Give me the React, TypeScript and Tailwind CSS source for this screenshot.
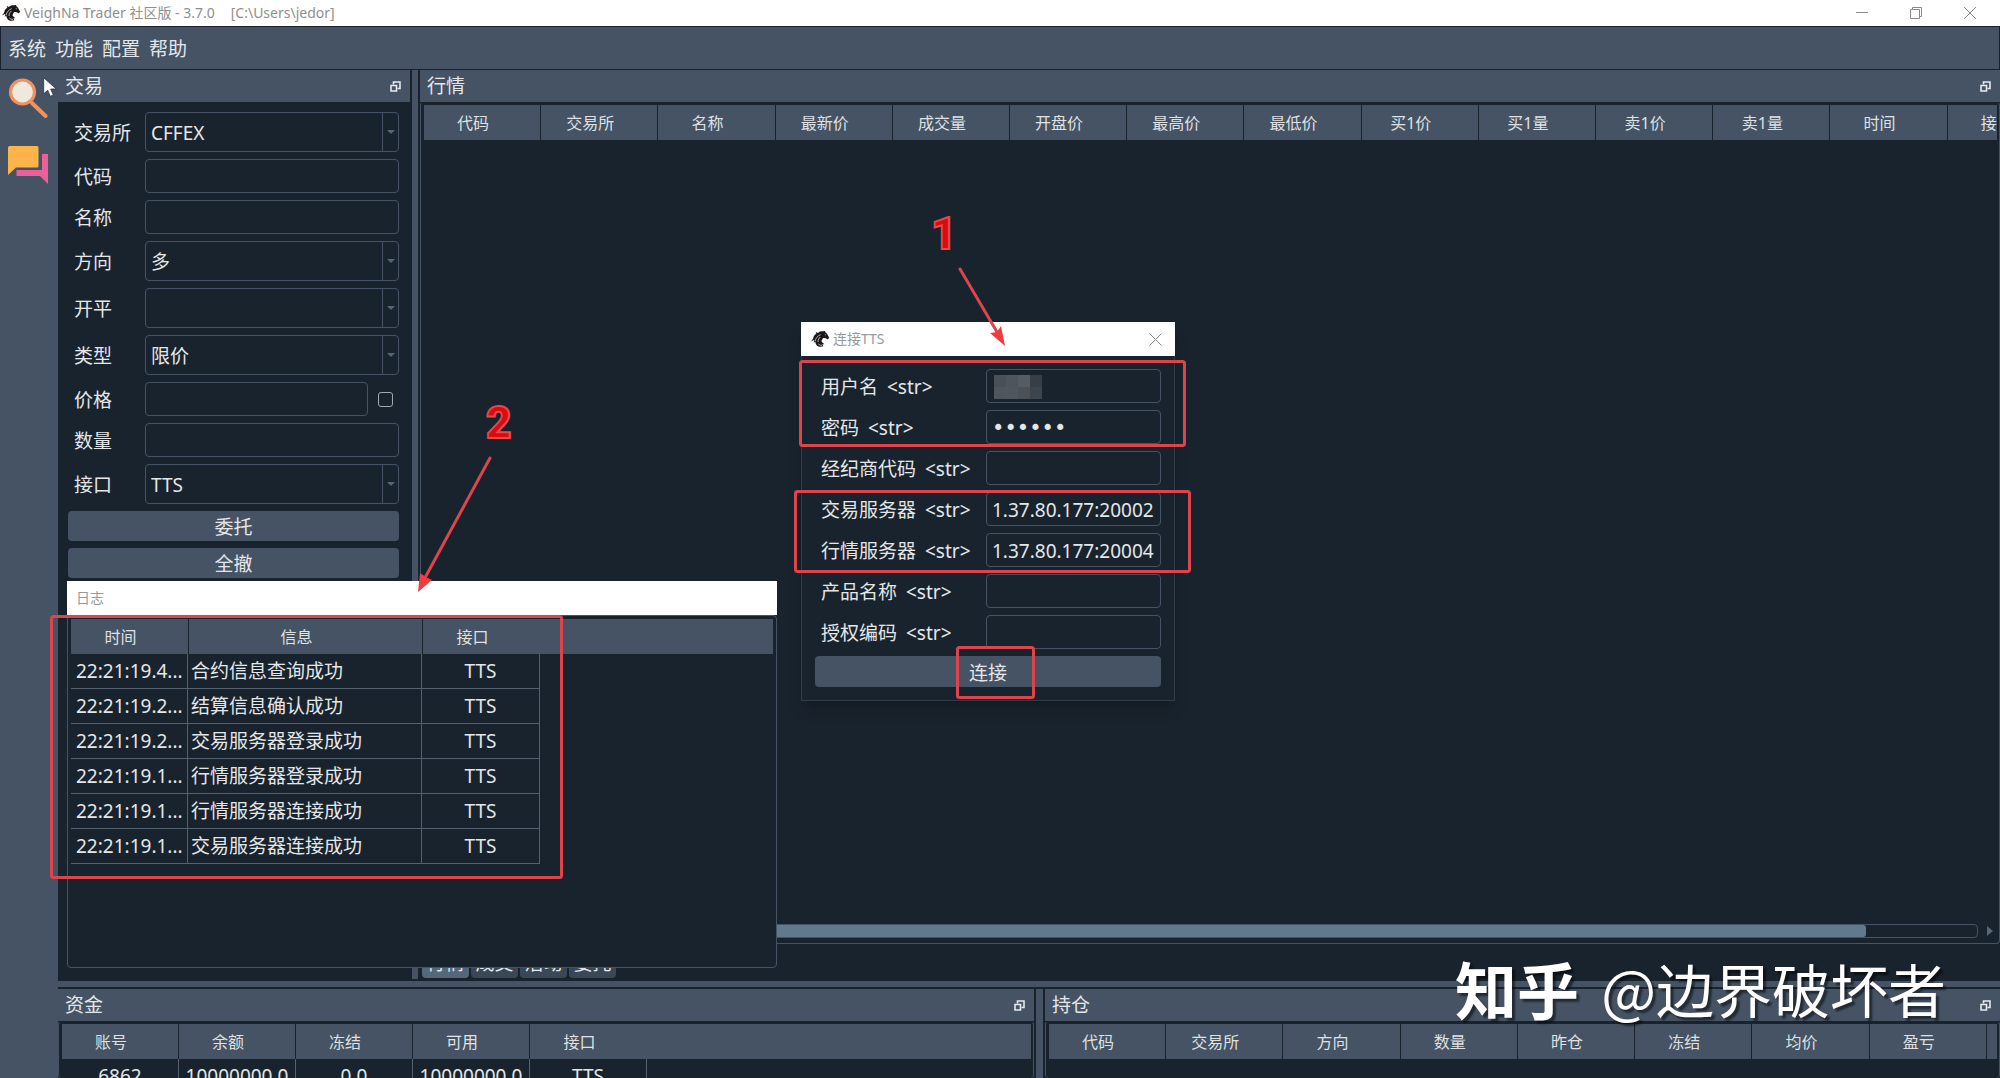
import type { ReactNode } from 'react';

const MARKET_COLUMNS = [
  '代码', '交易所', '名称', '最新价', '成交量', '开盘价', '最高价',
  '最低价', '买1价', '买1量', '卖1价', '卖1量', '时间', '接口',
];
const FUND_COLUMNS = ['账号', '余额', '冻结', '可用', '接口'];
const FUND_ROW = ['6862', '10000000.0', '0.0', '10000000.0', 'TTS'];
const POSITION_COLUMNS = ['代码', '交易所', '方向', '数量', '昨仓', '冻结', '均价', '盈亏', ''];

const LOGS = [
  { time: '22:21:19.4...', msg: '合约信息查询成功', gateway: 'TTS' },
  { time: '22:21:19.2...', msg: '结算信息确认成功', gateway: 'TTS' },
  { time: '22:21:19.2...', msg: '交易服务器登录成功', gateway: 'TTS' },
  { time: '22:21:19.1...', msg: '行情服务器登录成功', gateway: 'TTS' },
  { time: '22:21:19.1...', msg: '行情服务器连接成功', gateway: 'TTS' },
  { time: '22:21:19.1...', msg: '交易服务器连接成功', gateway: 'TTS' },
];

const TABS = ['行情', '成交', '活动', '委托'];

const MASK_BLOCKS = [
  'bg-[#495058]', 'bg-[#4f555c]', 'bg-[#575c62]', 'bg-[#363e47]',
  'bg-[#4f555c]', 'bg-[#50565d]', 'bg-[#4b5159]', 'bg-[#3c444d]',
];

/* ─── Icons ─────────────────────────────────────────────────────────── */

function HorseIcon() {
  return (
    <svg className="h-4 w-[18px] shrink-0" viewBox="0 0 54 48" aria-hidden="true">
      <path
        fill="#1c1718"
        d="M0 29c4-2 6-5 7-9 1-5 4-9 9-12l-2-5 7 3c4-4 9-5 14-5l7-1 1 4c4 2 6 6 8 10l3 5c0 3-2 5-4 6-3-1-5-4-9-4-3 0-5 0-6 2-2 4-4 6-3 9 3 4 7 5 8 8h-6l3 6-8 1c-6 0-11-2-13-6-2-3-3-6-3-9l-5 3 2-7c-4 0-6 1-8 5l1-6-6 3z"
      />
      <path fill="none" stroke="#fff" strokeWidth="2" d="M12 31c2-9 7-16 17-20M28 18c-5 4-7 9-7 15M22 39c3 3 7 4 11 4" />
      <path fill="#fff" d="M41 9l4 3-3 1z" />
    </svg>
  );
}

function FloatIcon() {
  return (
    <svg className="h-[11px] w-[11px]" viewBox="0 0 11 11" fill="none" stroke="#e6eaee" strokeWidth="1.6" aria-hidden="true">
      <path d="M3.5 3.5V1H10v6.5H7.5" />
      <path d="M1 4.5h5.5V10H1z" />
    </svg>
  );
}

function SearchIcon() {
  return (
    <svg className="h-10 w-10" viewBox="0 0 40 40" aria-hidden="true">
      <path d="M24 25L37.500 38" stroke="#f0915f" strokeWidth="4" strokeLinecap="round" />
      <circle cx="14.500" cy="14" r="12" fill="#efe9dc" stroke="#f0915f" strokeWidth="3.2" />
    </svg>
  );
}

function ChatIcon() {
  return (
    <svg className="h-10 w-10" viewBox="0 0 40 40" aria-hidden="true">
      <path fill="#e9609a" d="M34 9h6v30l-8-8H8.500v-6H34z" />
      <path fill="#fdb44b" d="M1 1h28a1.500 1.500 0 0 1 1.500 1.500V21a1.500 1.500 0 0 1-1.500 1.500H8L0 30V2.500z" />
    </svg>
  );
}

/* ─── Building blocks ───────────────────────────────────────────────── */

function DockTitle({ title }: { title: string }) {
  return (
    <div className="flex h-8 shrink-0 items-center justify-between bg-[#455364] pr-[9px] pl-[7px]">
      <h2 className="text-[19px] leading-7">{title}</h2>
      <button type="button" aria-label={`浮动${title}`}>
        <FloatIcon />
      </button>
    </div>
  );
}

function TableFrame({ children, className = '' }: { children: ReactNode; className?: string }) {
  return (
    <div className={`flex min-h-0 flex-1 flex-col rounded border border-t-[#19232d] border-[#455364] pt-[2px] pr-[2px] pl-[3px] ${className}`}>
      {children}
    </div>
  );
}

function HeadCell({ children, className = '' }: { children?: ReactNode; className?: string }) {
  return (
    <th className={`h-[35px] border-r border-[#19232d] p-0 pr-[18px] text-center text-base font-normal whitespace-nowrap text-[#dfe1e2] ${className}`}>
      {children}
    </th>
  );
}

function Row({ id, label, children }: { id: string; label: string; children: ReactNode }) {
  return (
    <div className="flex items-center">
      <label htmlFor={id} className="w-[77px] shrink-0 pt-[2px] pl-[6px]">{label}</label>
      {children}
    </div>
  );
}

function Combo({ id, value }: { id: string; value: string }) {
  return (
    <div className="flex h-10 min-w-0 flex-1 rounded border border-[#455364]">
      <select id={id} defaultValue={value} className="min-w-0 flex-1 appearance-none bg-transparent pt-[2px] pl-[5px] outline-none">
        <option value={value}>{value}</option>
      </select>
      <span className="flex w-4 items-center justify-center border-l border-[#455364]">
        <svg className="h-1 w-2" viewBox="0 0 8 4" aria-hidden="true">
          <path d="M0 0h8L4 4z" fill="#54687a" />
        </svg>
      </span>
    </div>
  );
}

const inputClass = 'h-[34px] min-w-0 flex-1 rounded border border-[#455364] bg-transparent px-[5px] pt-[2px] outline-none';

function TradingForm() {
  return (
    <form className="flex flex-col gap-[7px] pt-[10px] pr-[11px] pl-[10px]">
      <Row id="exchange" label="交易所"><Combo id="exchange" value="CFFEX" /></Row>
      <Row id="symbol" label="代码"><input id="symbol" className={inputClass} /></Row>
      <Row id="name" label="名称"><input id="name" className={inputClass} /></Row>
      <Row id="direction" label="方向"><Combo id="direction" value="多" /></Row>
      <Row id="offset" label="开平"><Combo id="offset" value="" /></Row>
      <Row id="type" label="类型"><Combo id="type" value="限价" /></Row>
      <Row id="price" label="价格">
        <input id="price" className={inputClass} />
        <input
          type="checkbox"
          aria-label="价格跟随行情"
          className="mr-[6px] ml-[10px] h-[15px] w-[15px] appearance-none rounded-[3px] border border-[#9da9b5]"
        />
      </Row>
      <Row id="volume" label="数量"><input id="volume" className={inputClass} /></Row>
      <Row id="gateway" label="接口"><Combo id="gateway" value="TTS" /></Row>
      <button type="button" className="h-[30px] rounded bg-[#455364] pt-[2px]">委托</button>
      <button type="button" className="h-[30px] rounded bg-[#455364] pt-[2px]">全撤</button>
    </form>
  );
}

/* ─── Floating windows ──────────────────────────────────────────────── */

function LogWindow() {
  return (
    <section className="absolute top-[581px] left-[67px] flex h-[387px] w-[710px] flex-col bg-[#19232d]">
      <h2 className="flex h-[34px] shrink-0 items-center bg-white pl-[9px] text-sm text-[#999]">日志</h2>
      <div className="flex-1 rounded border border-[#455364] p-[3px]">
        <div className="bg-[#455364]">
          <table className="w-[469px] table-fixed border-separate border-spacing-0">
            <thead>
              <tr>
                <HeadCell className="w-[118px]">时间</HeadCell>
                <HeadCell className="w-[234px]">信息</HeadCell>
                <HeadCell className="border-r-0">接口</HeadCell>
              </tr>
            </thead>
          </table>
        </div>
        <table className="w-[469px] table-fixed border-separate border-spacing-0">
          <colgroup>
            <col className="w-[117px]" />
            <col className="w-[234px]" />
            <col />
          </colgroup>
          <tbody>
            {LOGS.map((log, i) => (
              <tr key={i}>
                <td className="h-[35px] border-r border-b border-[#54606e] p-0 pl-[5px] leading-7 whitespace-nowrap">{log.time}</td>
                <td className="border-r border-b border-[#54606e] p-0 pl-[3px] leading-7 whitespace-nowrap">{log.msg}</td>
                <td className="border-r border-b border-[#54606e] p-0 text-center leading-7">{log.gateway}</td>
              </tr>
            ))}
          </tbody>
        </table>
      </div>
    </section>
  );
}

function ConnectField({ id, label, value = '', type = 'text', inputStyle = '', children }: {
  id: string;
  label: string;
  value?: string;
  type?: string;
  inputStyle?: string;
  children?: ReactNode;
}) {
  return (
    <div className="relative flex items-center">
      <label htmlFor={id} className="w-[171px] shrink-0 pt-[2px] pl-[6px]">
        {label} <span className="ml-1">&lt;str&gt;</span>
      </label>
      <input id={id} type={type} defaultValue={value} className={`${inputClass} ${inputStyle}`} />
      {children}
    </div>
  );
}

function ConnectDialog() {
  return (
    <section role="dialog" aria-label="连接TTS" className="absolute top-[322px] left-[801px] w-[374px] bg-[#19232d] shadow-lg shadow-black/20">
      <div className="flex h-[34px] items-center bg-white pr-[13px] pl-[10px] text-sm text-[#999]">
        <HorseIcon />
        <h2 className="flex-1 pl-1">连接TTS</h2>
        <button type="button" aria-label="关闭">
          <svg className="h-[13px] w-[13px]" viewBox="0 0 13 13" stroke="#8a8a8a" aria-hidden="true">
            <path d="M.5.5l12 12M12.500.5l-12 12" />
          </svg>
        </button>
      </div>
      <form className="flex flex-col gap-[7px] border border-t-0 border-[#2f3c4a] px-[13px] pt-[13px] pb-[13px]">
        <ConnectField id="user" label="用户名">
          <span className="absolute top-[6px] right-[119px] grid w-12 grid-cols-4">
            {MASK_BLOCKS.map((tone, i) => (
              <span key={i} className={`h-3 w-3 ${tone}`} />
            ))}
          </span>
        </ConnectField>
        <ConnectField
          id="password"
          label="密码"
          type="password"
          value="123456"
          inputStyle="font-['DejaVu_Sans',sans-serif] text-[21px]"
        />
        <ConnectField id="broker" label="经纪商代码" />
        <ConnectField id="td" label="交易服务器" value="1.37.80.177:20002" />
        <ConnectField id="md" label="行情服务器" value="1.37.80.177:20004" />
        <ConnectField id="product" label="产品名称" />
        <ConnectField id="auth" label="授权编码" />
        <button type="button" className="h-[31px] rounded bg-[#455364] pt-[2px]">连接</button>
      </form>
    </section>
  );
}

/* ─── Red boxes, arrows and step numbers drawn over the windows ─────── */

function Annotations() {
  return (
    <svg className="pointer-events-none absolute top-0 left-0 h-full w-full" fill="none" aria-hidden="true">
      <g stroke="#dc454b" strokeWidth="3">
        <rect x="800.5" y="361.5" width="384" height="84" rx="2" />
        <rect x="795.5" y="491.5" width="394" height="80" rx="2" />
        <rect x="957.5" y="647.5" width="76" height="50" rx="2" />
        <rect x="51.5" y="616.5" width="510" height="261" rx="2" />
        <path d="M960 269L997 332M490 458L426 576" strokeLinecap="round" />
      </g>
      <g fill="#f03c3c">
        <path d="M1005 346L990 333L997 332L1001 326Z" />
        <path d="M418 592L420 573L426 577L432 580Z" />
      </g>
      <g
        className="font-[Roboto,sans-serif] text-[44px] font-black"
        fill="#d90b10"
        stroke="#e5484d"
        strokeWidth="2"
      >
        <text x="931" y="249">1</text>
        <text x="486" y="438">2</text>
      </g>
    </svg>
  );
}

export default function App() {
  return (
    <div className="relative flex h-screen flex-col overflow-hidden bg-[#19232d] font-['Noto_Sans','Noto_Sans_CJK_SC',sans-serif] text-[19px] leading-7 text-[#e4e7ea]">
      {/* Title bar */}
      <header className="flex h-[26px] shrink-0 items-center bg-white pr-[3px] pl-[2px] text-sm text-[#8f8f8f]">
        <HorseIcon />
        <h1 className="flex flex-1 gap-4 pl-1 whitespace-nowrap">
          <span>VeighNa Trader 社区版 - 3.7.0</span>
          <span>[C:\Users\jedor]</span>
        </h1>
        <button type="button" aria-label="最小化" className="flex w-[54px] justify-center">
          <svg className="h-3 w-3" viewBox="0 0 12 12" stroke="#8a8a8a" aria-hidden="true"><path d="M0 5.500h12" /></svg>
        </button>
        <button type="button" aria-label="还原" className="flex w-[54px] justify-center">
          <svg className="h-3 w-3" viewBox="0 0 12 12" fill="none" stroke="#8a8a8a" aria-hidden="true">
            <path d="M.5 2.500h9v9h-9zM2.500 2.500v-2h9v9h-2" />
          </svg>
        </button>
        <button type="button" aria-label="关闭" className="flex w-[54px] justify-center">
          <svg className="h-3 w-3" viewBox="0 0 12 12" stroke="#8a8a8a" aria-hidden="true"><path d="M0 0l12 12M12 0L0 12" /></svg>
        </button>
      </header>

      {/* Menu bar */}
      <nav className="flex h-11 shrink-0 items-center gap-[9px] border border-[#19232d] bg-[#455364] pt-[2px] pl-[7px]">
        <button type="button">系统</button>
        <button type="button">功能</button>
        <button type="button">配置</button>
        <button type="button">帮助</button>
      </nav>

      <div className="flex min-h-0 flex-1">
        {/* Tool bar */}
        <aside className="flex w-[58px] shrink-0 flex-col gap-[27px] bg-[#455364] pt-2 pl-2">
          <button type="button" aria-label="查询合约" className="h-10 w-10"><SearchIcon /></button>
          <button type="button" aria-label="社区论坛" className="h-10 w-10"><ChatIcon /></button>
        </aside>

        <div className="flex min-w-0 flex-1 flex-col">
          <div className="flex min-h-0 flex-1">
            <section className="w-[352px] shrink-0">
              <DockTitle title="交易" />
              <TradingForm />
            </section>
            <div className="mx-[2px] mb-[2px] w-[6px] shrink-0 bg-[#455364]" />

            {/* Market data */}
            <section className="flex min-w-0 flex-1 flex-col">
              <DockTitle title="行情" />
              <TableFrame>
                <div className="overflow-hidden bg-[#455364]">
                  <table className="w-[1641px] table-fixed border-separate border-spacing-0">
                    <thead>
                      <tr>
                        {MARKET_COLUMNS.map((name) => <HeadCell key={name}>{name}</HeadCell>)}
                      </tr>
                    </thead>
                  </table>
                </div>
                <div className="min-h-0 flex-1" />
                <div className="mb-[5px] flex h-[14px] items-center gap-[9px] pr-1 pl-5">
                  <div className="h-full flex-1 rounded border border-[#455364] pr-[111px]">
                    <div className="h-full rounded-[3px] bg-[#60798b]" />
                  </div>
                  <svg className="h-[10px] w-[6px]" viewBox="0 0 6 10" aria-hidden="true">
                    <path d="M0 0l6 5-6 5z" fill="#54687a" />
                  </svg>
                </div>
              </TableFrame>
              <div className="flex h-[37px] shrink-0 gap-[2px] pt-[3px] pb-[3px] pl-[2px]">
                {TABS.map((tab, i) => (
                  <button
                    key={tab}
                    type="button"
                    className={`w-[47px] rounded-b ${i === 0 ? 'bg-[#54687a]' : 'bg-[#3a4757]'}`}
                  >
                    {tab}
                  </button>
                ))}
              </div>
            </section>
          </div>

          <div className="mb-[2px] h-[6px] shrink-0 bg-[#455364]" />

          <div className="flex h-[89px] shrink-0 overflow-hidden">
            {/* Funds */}
            <section className="flex w-[976px] shrink-0 flex-col">
              <DockTitle title="资金" />
              <TableFrame className="border-b-0">
                <table className="w-full table-fixed border-separate border-spacing-0">
                  <thead>
                    <tr className="bg-[#455364]">
                      {FUND_COLUMNS.map((name) => (
                        <HeadCell key={name} className="w-[117px] last-of-type:border-r-0">{name}</HeadCell>
                      ))}
                      <td />
                    </tr>
                  </thead>
                  <tbody>
                    <tr>
                      {FUND_ROW.map((value, i) => (
                        <td key={i} className="h-[34px] border-r border-b border-[#54606e] p-0 text-center leading-7">{value}</td>
                      ))}
                      <td />
                    </tr>
                  </tbody>
                </table>
              </TableFrame>
            </section>
            <div className="mr-[2px] ml-[2px] w-[7px] shrink-0 bg-[#455364]" />

            {/* Positions */}
            <section className="flex min-w-0 flex-1 flex-col">
              <DockTitle title="持仓" />
              <TableFrame className="border-b-0">
                <div className="overflow-hidden bg-[#455364]">
                  <table className="w-[1055px] table-fixed border-separate border-spacing-0">
                    <thead>
                      <tr>
                        {POSITION_COLUMNS.map((name, i) => <HeadCell key={i}>{name}</HeadCell>)}
                      </tr>
                    </thead>
                  </table>
                </div>
              </TableFrame>
            </section>
          </div>
        </div>
      </div>

      <LogWindow />
      <ConnectDialog />
      <Annotations />

      {/* Mouse pointer */}
      <svg className="pointer-events-none absolute top-[77px] left-[43px] h-[21px] w-[14px]" viewBox="0 0 14 21" aria-hidden="true">
        <path d="M.7.8v16l4-3.500 2.600 6 3-1.300-2.600-6h5.600z" fill="#fff" stroke="#2b3440" strokeWidth=".8" />
      </svg>

      {/* Watermark */}
      <p className="pointer-events-none absolute right-[54px] bottom-[57px] flex items-center gap-[22px] font-['Noto_Sans_CJK_SC',sans-serif] leading-[66px] whitespace-nowrap text-white [text-shadow:3px_3px_2px_rgb(0_0_0/0.5)]">
        <span className="text-[62px] font-bold">知乎</span>
        <span className="text-[58px]">@边界破坏者</span>
      </p>
    </div>
  );
}
